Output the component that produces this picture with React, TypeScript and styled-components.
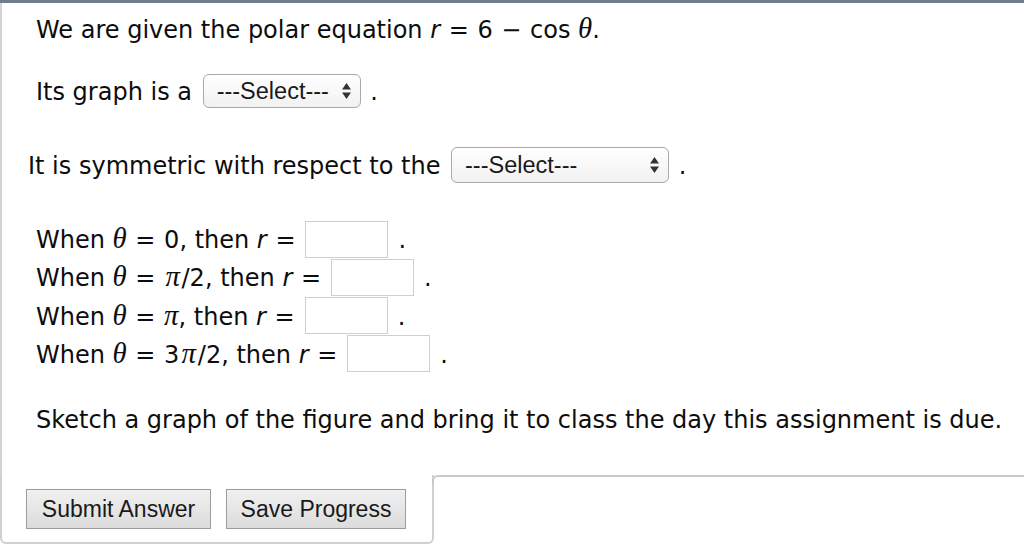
import React from "react"
import styled, { createGlobalStyle } from "styled-components"

const GlobalStyle = createGlobalStyle`
  html, body {
    margin: 0;
    padding: 0;
    background: #fff;
  }
  body {
    font-family: "DejaVu Sans", Verdana, sans-serif;
    color: #111;
  }
`

const Page = styled.div`
  width: 1024px;
  height: 553px;
  box-sizing: border-box;
  border-top: 3px solid #6f7e8a;
  overflow: hidden;
  display: flex;
  flex-direction: column;
`

const Question = styled.div`
  height: 472px;
  box-sizing: border-box;
  border-left: 2px solid #d4d4d4;
  padding: 8px 0 0 34px;
  display: flex;
  flex-direction: column;
`

const Row = styled.div<{ $top?: number; $indent?: number; $h?: number }>`
  height: ${p => p.$h ?? 38}px;
  line-height: ${p => p.$h ?? 38}px;
  margin-top: ${p => p.$top ?? 0}px;
  margin-left: ${p => p.$indent ?? 0}px;
  font-size: 24px;
  white-space: pre;
  color: #0d0d0d;
`

const Var = styled.span`
  font-style: italic;
`

const Op = styled.span`
  margin: 0 1px;
`

const Greek = styled.span<{ $pad?: number }>`
  font-family: "Liberation Serif", "Times New Roman", serif;
  font-style: italic;
  font-size: 1.2em;
  line-height: 1;
  margin: 0 ${p => p.$pad ?? 0}px;
`

const SelectWrap = styled.span<{ $w: number; $h: number }>`
  position: relative;
  display: inline-block;
  vertical-align: middle;
  width: ${p => p.$w}px;
  height: ${p => p.$h}px;
  margin: -4px 2px 0 3px;
  line-height: normal;
`

const Select = styled.select`
  appearance: none;
  -webkit-appearance: none;
  display: block;
  width: 100%;
  height: 100%;
  box-sizing: border-box;
  border: 1px solid #a9a9a9;
  border-radius: 6px;
  background: linear-gradient(#ffffff, #f1f1f1);
  font-family: "Liberation Sans", Arial, sans-serif;
  font-size: 23.5px;
  color: #1a1a1a;
  padding: 0 0 0 13px;
  outline: none;
`

const Arrows = styled.svg`
  position: absolute;
  right: 9px;
  top: 50%;
  transform: translateY(-50%);
  pointer-events: none;
`

const Answer = styled.input`
  display: inline-block;
  vertical-align: middle;
  width: 83px;
  height: 37px;
  box-sizing: border-box;
  border: 1px solid #cfcfcf;
  background: #fff;
  margin: -4px 10px 0 9px;
  padding: 0;
  outline: none;
`

const Footer = styled.div`
  display: flex;
  align-items: flex-start;
`

const ButtonTab = styled.div`
  width: 434px;
  height: 69px;
  box-sizing: border-box;
  border: 2px solid #d0d0d0;
  border-top: none;
  border-radius: 0 0 6px 6px;
  padding: 14px 0 0 24px;
  display: flex;
  gap: 15px;
`

const Filler = styled.div`
  flex: 1;
  height: 8px;
  margin-left: -2px;
  border-top: 2px solid #c9c9c9;
  border-left: 2px solid #c9c9c9;
  border-top-left-radius: 6px;
`

const Button = styled.button<{ $w: number }>`
  width: ${p => p.$w}px;
  height: 40px;
  box-sizing: border-box;
  border: 1px solid #9c9c9c;
  background: linear-gradient(#f0f0f0, #dcdcdc);
  font-family: "Liberation Sans", Arial, sans-serif;
  font-size: 23px;
  color: #1a1a1a;
  padding: 0;
`

const UpDown = () => (
  <Arrows width="11" height="18" viewBox="0 0 11 18">
    <path d="M5.5 1 L10 7.5 L1 7.5 Z" fill="#333" />
    <path d="M5.5 17 L10 10.5 L1 10.5 Z" fill="#333" />
  </Arrows>
)

const Dropdown = ({ w, h }: { w: number; h: number }) => (
  <SelectWrap $w={w} $h={h}>
    <Select defaultValue="">
      <option value="">---Select---</option>
    </Select>
    <UpDown />
  </SelectWrap>
)

const values = [
  { label: <>0</> },
  { label: <><Greek $pad={1.5}>π</Greek>/2</> },
  { label: <><Greek>π</Greek></> },
  { label: <>3<Greek $pad={2}>π</Greek>/2</> },
]

export default function App() {
  return (
    <>
      <GlobalStyle />
      <Page>
        <Question>
          <Row>
            We are given the polar equation <Var>r</Var> <Op>=</Op> 6 <Op>−</Op> cos <Greek>θ</Greek>.
          </Row>
          <Row $top={24}>
            Its graph is a <Dropdown w={158} h={34} /> .
          </Row>
          <Row $top={36} $indent={-8}>
            It is symmetric with respect to the <Dropdown w={218} h={36} /> .
          </Row>
          {values.map((v, i) => (
            <Row key={i} $top={i === 0 ? 36 : 0} $h={38.3}>
              When <Greek>θ</Greek> <Op>=</Op> {v.label}, then <Var>r</Var> <Op>=</Op><Answer type="text" />.
            </Row>
          ))}
          <Row $top={26.7}>
            Sketch a graph of the figure and bring it to class the day this assignment is due.
          </Row>
        </Question>
        <Footer>
          <ButtonTab>
            <Button $w={185}>Submit Answer</Button>
            <Button $w={180}>Save Progress</Button>
          </ButtonTab>
          <Filler />
        </Footer>
      </Page>
    </>
  )
}
